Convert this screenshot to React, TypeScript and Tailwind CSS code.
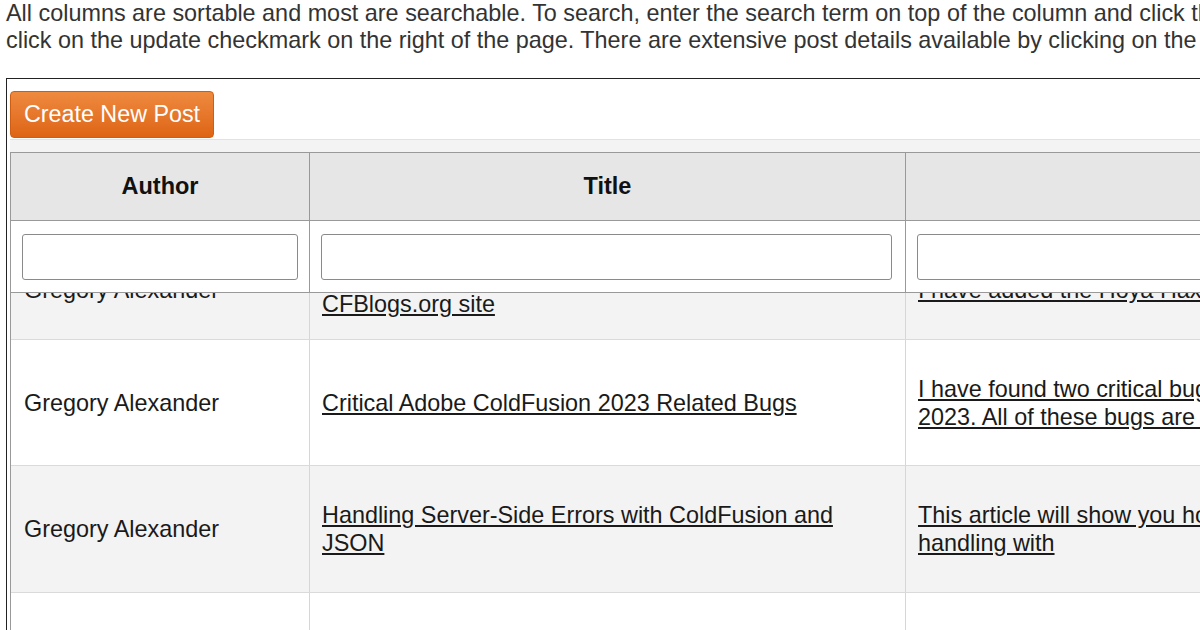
import React, { useLayoutEffect, useRef } from "react";

type Post = {
    author: string;
    title: string[];
    description: string[];
    shade: boolean;
    height: string;
};

const posts: Post[] = [
    {
        author: "Gregory Alexander",
        title: ["Galaxie Blog has been added to the", "CFBlogs.org site"],
        description: ["I have added the Hoya Haxa blog to the CFBlogs.org aggregator"],
        shade: true,
        height: "h-[100px]",
    },
    {
        author: "Gregory Alexander",
        title: ["Critical Adobe ColdFusion 2023 Related Bugs"],
        description: [
            "I have found two critical bugs when upgrading to ColdFusion",
            "2023. All of these bugs are related to the new version",
        ],
        shade: false,
        height: "h-[126px]",
    },
    {
        author: "Gregory Alexander",
        title: ["Handling Server-Side Errors with ColdFusion and", "JSON"],
        description: [
            "This article will show you how to perform server-side error",
            "handling with",
        ],
        shade: true,
        height: "h-[127px]",
    },
    {
        author: "Gregory Alexander",
        title: ["Using Kendo Grids with ColdFusion"],
        description: ["A walk through of the Kendo UI grid widget"],
        shade: false,
        height: "h-[126px]",
    },
];

const font = "font-['Liberation_Sans',Arial,sans-serif]";

export default function App() {
    const scrollRef = useRef<HTMLDivElement>(null);

    // the grid body is scrolled down a little in the screenshot
    useLayoutEffect(() => {
        if (scrollRef.current) scrollRef.current.scrollTop = 53;
    }, []);

    return (
        <div className={`w-[1200px] h-[630px] overflow-hidden bg-white ${font}`}>
            {/* Intro text */}
            <div className="pl-[6px] text-[23.4px] leading-[27px] text-[#333] whitespace-nowrap">
                <div>
                    All columns are sortable and most are searchable. To search, enter the search term on top of the column and click the filter button, then
                </div>
                <div>
                    click on the update checkmark on the right of the page. There are extensive post details available by clicking on the post title.
                </div>
            </div>

            {/* Grid frame */}
            <div className="mt-[24px] ml-[6px] w-[1800px] border-l border-t border-[#222] pl-[3px]">
                {/* Toolbar */}
                <div className="pt-[12px] pb-[1px] border-b border-[#e2e2e2]">
                    <button className="w-[204px] h-[47px] rounded-[4px] border border-[#cf5e12] bg-gradient-to-b from-[#ee8a3e] to-[#de6412] text-white text-[23.3px]">
                        Create New Post
                    </button>
                </div>
                <div className="h-[12px] bg-[#f3f3f3]" />

                <div className="border-l border-[#999] w-[1696px]">
                    {/* Header */}
                    <div className="grid grid-cols-[299px_596px_800px] border-t border-b border-[#999] bg-[#e6e6e6] h-[69px]">
                        <div className="border-r border-[#999] flex items-center justify-center text-[23.5px] font-bold text-[#111]">
                            Author
                        </div>
                        <div className="border-r border-[#999] flex items-center justify-center text-[23.5px] font-bold text-[#111]">
                            Title
                        </div>
                        <div className="flex items-center justify-center text-[23.5px] font-bold text-[#111]">
                            Description
                        </div>
                    </div>

                    {/* Filter row */}
                    <div className="grid grid-cols-[299px_596px_800px] border-b border-[#999] h-[72px] bg-white">
                        <div className="border-r border-[#999] px-[11px] pt-[13px]">
                            <input className="block w-full h-[46px] border border-[#8a8a8a] rounded-[3px] bg-white outline-none" />
                        </div>
                        <div className="border-r border-[#999] pl-[11px] pr-[13px] pt-[13px]">
                            <input className="block w-full h-[46px] border border-[#8a8a8a] rounded-[3px] bg-white outline-none" />
                        </div>
                        <div className="px-[11px] pt-[13px]">
                            <input className="block w-full h-[46px] border border-[#8a8a8a] rounded-[3px] bg-white outline-none" />
                        </div>
                    </div>

                    {/* Rows */}
                    <div ref={scrollRef} className="h-[340px] overflow-hidden">
                        {posts.map((post, i) => (
                            <div
                                key={i}
                                className={`grid grid-cols-[299px_596px_800px] ${post.height} border-b border-[#dadada] text-[23.4px] leading-[28px] text-[#1a1a1a] ${post.shade ? "bg-[#f3f3f3]" : "bg-white"}`}
                            >
                                <div className="border-r border-[#d6d6d6] pl-[13px] flex items-center whitespace-nowrap">
                                    {post.author}
                                </div>
                                <div className="border-r border-[#d6d6d6] pl-[12px] flex flex-col justify-center whitespace-nowrap">
                                    {post.title.map((line, j) => (
                                        <a key={j} href="#" className="underline self-start">
                                            {line}
                                        </a>
                                    ))}
                                </div>
                                <div className="pl-[12px] flex flex-col justify-center whitespace-nowrap">
                                    {post.description.map((line, j) => (
                                        <a key={j} href="#" className="underline self-start">
                                            {line}
                                        </a>
                                    ))}
                                </div>
                            </div>
                        ))}
                    </div>
                </div>
            </div>
        </div>
    );
}
